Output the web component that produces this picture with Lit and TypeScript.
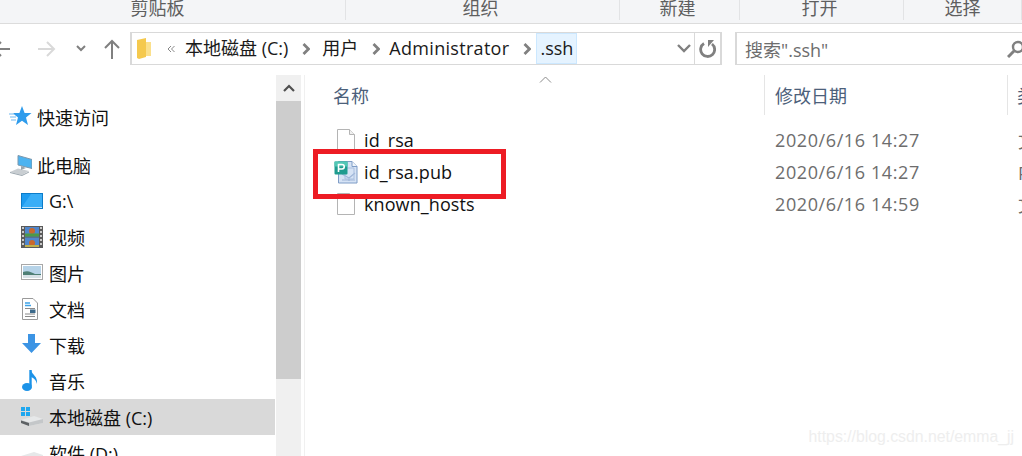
import { LitElement, html, css, svg } from "lit";
import { customElement } from "lit/decorators.js";

const chev = html`<svg class="chev" width="8" height="12" viewBox="0 0 8 12"><path d="M1.5 1 L6.5 6 L1.5 11" fill="none" stroke="#808080" stroke-width="2.8"/></svg>`;

const blank = html`<svg class="ficon" width="24" height="24" viewBox="0 0 24 24"><path d="M3.5 1.5H15.5L20.5 6.5V22.5H3.5Z" fill="#fff" stroke="#b4b4b4"/><path d="M15.5 1.5V6.5H20.5" fill="#f0f0f0" stroke="#b4b4b4"/></svg>`;

const pub = html`<svg class="ficon" width="24" height="24" viewBox="0 0 24 24">
  <path d="M4.5 1.500H18L23 6.500V23H4.500Z" fill="#d6e3f5" stroke="#7f9cc6"/>
  <path d="M18 1.500V6.500H23" fill="#f2f6fb" stroke="#7f9cc6"/>
  <path d="M8 14L15 18L21 13M15 18V21M8 20H21" fill="none" stroke="#9fb6d8" stroke-width="1.200"/>
  <path d="M11 8H20V19H11Z" fill="none" stroke="#a9bede"/>
  <rect x="0.500" y="1.500" width="13" height="13" rx="1" fill="#1f9c8f"/>
  <rect x="0.500" y="1.500" width="13" height="5" fill="#52c7b5"/>
  <path d="M4.500 12V4.500H8A2.200 2.200 0 0 1 8 9H4.500" fill="none" stroke="#fff" stroke-width="1.600"/>
</svg>`;

const star = svg`<path d="M13 0L15.600 7H22.500L17 11.500L19 19L13 14.800L7 19L9 11.500L3.500 7H10.400Z" fill="#2f9cec"/><path d="M0 8H5M1 11H7M2 14H7" stroke="#9fd0f5" stroke-width="1.300"/>`;
const pc = svg`<path d="M9 1.500L23 5.500V14.500L9 11Z" fill="#4db3f0" stroke="#7d98ad"/><path d="M1 18L9 14.500L20 17L13 21Z" fill="#c9ced2"/><path d="M12 12L17 14L12 16Z" fill="#9aa5ad"/><path d="M1 18.500L13 21.500L20 18" fill="none" stroke="#9aa5ad"/>`;
const screen = svg`<rect x="0.500" y="3.500" width="21" height="15" fill="#1e9cf0" stroke="#0c7cc9"/><path d="M1 17L10 4H21V17Z" fill="#39aef7"/><path d="M1 17.500H21" stroke="#bfe4fb"/>`;
const film = svg`<rect x="0" y="0" width="22" height="22" fill="#5a5a5a"/><rect x="4" y="1" width="14" height="9.500" fill="#4f86cc"/><rect x="4" y="11.500" width="14" height="9.500" fill="#4f86cc"/><circle cx="11" cy="5" r="3" fill="#c9682c"/><rect x="4" y="7.500" width="14" height="3" fill="#4c9a47"/><circle cx="11" cy="17" r="3" fill="#c9682c"/><rect x="4" y="19" width="14" height="2" fill="#c0b04c"/><path d="M2 1V21M20 1V21" stroke="#e4e4e4" stroke-width="1.600" stroke-dasharray="2 2"/>`;
const picture = svg`<rect x="0.500" y="2.500" width="21" height="15" fill="#fff" stroke="#a8a8a8"/><rect x="2" y="4" width="18" height="12" fill="#b6d3e8"/><path d="M2 10C7 8 10 10 14 12L20 12V16H2Z" fill="#4e7f75"/><path d="M2 13H20V16H2Z" fill="#d7e1e6"/>`;
const doc = svg`<path d="M1.500 0.500H12L16.500 5V21.500H1.500Z" fill="#fff" stroke="#9a9a9a"/><path d="M4 5H9M4 7.500H10" stroke="#3ea2e8" stroke-width="1.400"/><path d="M4 10.500H14M4 16H14M4 18.500H14" stroke="#8a8a8a"/><rect x="9" y="11.500" width="5.500" height="3.500" fill="#3d6b8c"/>`;
const down = svg`<path d="M7 0H14V9H20L10.500 19L1 9H7Z" fill="#3c94e4"/>`;
const note = svg`<path d="M9.500 0V16" stroke="#1c93e8" stroke-width="2.400"/><ellipse cx="6" cy="17" rx="5" ry="4" fill="#1c93e8"/><path d="M10 0C11 5 17 6 16 14C15 10 13 8 10 7Z" fill="#1c93e8"/>`;
const disk = svg`<path d="M0 14L13 10L22 13L22 17L8 20L0 17Z" fill="#e6e8e9"/><path d="M0 14L8 16.500L22 13L22 17L8 20L0 17Z" fill="#c4c7c9"/><path d="M0 14.500L8 17V20L0 17Z" fill="#5d6164"/><path d="M0 1H4V5H0ZM5 1H9V5H5ZM0 6H4V10H0ZM5 6H9V10H5Z" fill="#1ea7ef"/>`;
const disk2 = svg`<path d="M0 14L13 10L22 13L22 17L8 20L0 17Z" fill="#e6e8e9"/>`;

interface NavItem { label: string; icon: unknown; child: boolean; sel?: boolean; top?: boolean; }
const items: NavItem[] = [
  { label: "快速访问", icon: star, child: false },
  { label: "此电脑", icon: pc, child: false, top: true },
  { label: "G:\\", icon: screen, child: true },
  { label: "视频", icon: film, child: true },
  { label: "图片", icon: picture, child: true },
  { label: "文档", icon: doc, child: true },
  { label: "下载", icon: down, child: true },
  { label: "音乐", icon: note, child: true },
  { label: "本地磁盘 (C:)", icon: disk, child: true, sel: true },
  { label: "软件 (D:)", icon: disk2, child: true },
];

const files = [
  { name: "id_rsa", icon: blank, date: "2020/6/16 14:27", type: "文件" },
  { name: "id_rsa.pub", icon: pub, date: "2020/6/16 14:27", type: "PUB 文件" },
  { name: "known_hosts", icon: blank, date: "2020/6/16 14:59", type: "文件" },
];

@customElement("app-root")
export class AppRoot extends LitElement {
  static styles = css`
    :host {
      display: block;
      position: relative;
      width: 1022px;
      height: 456px;
      overflow: hidden;
      background: #fff;
      font-family: "Open Sans", "Noto Sans CJK SC", sans-serif;
      font-size: 18px;
      color: #1a1a1a;
    }
    .ribbon {
      display: flex;
      height: 24px;
      box-sizing: border-box;
      background: #f4f5f7;
      border-bottom: 1px solid #dcdcdc;
      color: #5f5f5f;
    }
    .group {
      height: 20px;
      line-height: 16px;
      box-sizing: border-box;
      border-right: 1px solid #e2e3e5;
      text-align: center;
      white-space: nowrap;
      flex: none;
    }
    .nav {
      display: flex;
      height: 47px;
      padding-top: 8px;
      box-sizing: border-box;
      align-items: flex-start;
    }
    .arrows {
      display: flex;
      width: 122px;
      height: 33px;
      align-items: center;
      margin-left: -8px;
      flex: none;
    }
    .arrows svg { flex: none; }
    .fwd { margin-left: 26px; }
    .drop { margin-left: 20px; }
    .up { margin-left: 18px; }
    .address {
      display: flex;
      align-items: center;
      width: 592px;
      height: 33px;
      box-sizing: border-box;
      border: 2px solid #d9d9d9;
      border-width: 1px 2px;
      flex: none;
      margin-left: 16px;
      padding-left: 5px;
    }
    .folder { flex: none; }
    .laquo { margin-left: 15px; margin-right: 10px; flex: none; }
    .crumb { white-space: nowrap; flex: none; line-height: 31px; }
    .c-user { margin-left: 1px; }
    .wide { letter-spacing: 0.3px; margin-left: -2px; }
    .chev { flex: none; margin: 0 11px 0 14px; }
    .current {
      margin-left: -6px;
      padding: 0 3px;
      height: 31px;
      box-sizing: border-box;
      background: #e5f3ff;
      border: 1px solid #cce8ff;
      line-height: 29px;
    }
    .spacer { flex: 1; }
    .combo { flex: none; margin-right: 3px; }
    .refresh {
      flex: none;
      width: 25px;
      height: 31px;
      display: flex;
      align-items: center;
      justify-content: center;
      border-left: 1px solid #d9d9d9;
    }
    .search {
      display: flex;
      align-items: center;
      justify-content: space-between;
      margin-left: 13px;
      width: 292px;
      height: 33px;
      box-sizing: border-box;
      border: 2px solid #d9d9d9;
      border-width: 1px 2px;
      padding-left: 8px;
      color: #6d6d6d;
      flex: none;
    }
    .search svg { flex: none; }
    .main {
      display: flex;
      height: 385px;
      padding-top: 4px;
      box-sizing: border-box;
    }
    .side {
      width: 275px;
      flex: none;
      padding-top: 24px;
      box-sizing: border-box;
      color: #111;
    }
    .row {
      display: flex;
      align-items: center;
      height: 36px;
      padding-left: 9px;
      box-sizing: border-box;
      white-space: nowrap;
    }
    .row svg { flex: none; margin-right: 5px; }
    .row.top { margin-top: 12px; }
    .row.child { padding-left: 21px; }
    .row.child svg { margin-right: 6px; }
    .row.sel { background: #d9d9d9; }
    .scroll {
      width: 25px;
      margin-left: 1px;
      flex: none;
      background: #f0f0f0;
      display: flex;
      flex-direction: column;
    }
    .sbtn {
      height: 26px;
      display: flex;
      align-items: center;
      justify-content: center;
      flex: none;
    }
    .thumb { height: 278px; background: #cdcdcd; flex: none; }
    .list {
      flex: 1;
      min-width: 0;
      margin-left: 3px;
      border-left: 1px solid #f0f0f0;
      position: relative;
    }
    .head {
      display: flex;
      height: 40px;
      color: #4c607a;
    }
    .col-name {
      width: 460px;
      padding-left: 28px;
      box-sizing: border-box;
      flex: none;
      white-space: nowrap;
    }
    .col-date {
      width: 243px;
      padding-left: 10px;
      box-sizing: border-box;
      flex: none;
      white-space: nowrap;
    }
    .col-type { flex: 1; padding-left: 9px; white-space: nowrap; }
    .head > div {
      line-height: 42px;
      border-right: 1px solid #e5e5e5;
    }
    .head .col-type { border-right: none; }
    .sort { position: absolute; left: 234px; top: 1px; }
    .files { padding-top: 9px; }
    .file { display: flex; height: 32px; align-items: center; }
    .file .col-name {
      display: flex;
      align-items: center;
      padding-left: 29px;
      gap: 6px;
      color: #111;
      letter-spacing: 0.1px;
    }
    .file .col-date, .file .col-type { color: #6d6d6d; }
    .file .col-date { padding-left: 10px; letter-spacing: 0.6px; }
    .file .col-type { padding-left: 10px; }
    .ficon { flex: none; }
    .mark {
      position: absolute;
      left: 313px;
      top: 149px;
      width: 193px;
      height: 50px;
      box-sizing: border-box;
      border: 5px solid #ed1c24;
      pointer-events: none;
    }
    .wm {
      position: absolute;
      right: 8px;
      top: 428px;
      font-family: "Liberation Sans", sans-serif;
      font-size: 15.8px;
      color: #eeeeee;
      white-space: nowrap;
    }
  `;

  render() {
    const groups: [string, number, number][] = [
      ["剪贴板", 346, 30], ["组织", 274, 4], ["新建", 120, 4], ["打开", 164, 4], ["选择", 118, 0],
    ];
    return html`
      <div class="ribbon">
        ${groups.map(([g, w, p]) => html`<div class="group" style="width:${w}px;padding-right:${p}px">${g}</div>`)}
      </div>
      <div class="nav">
        <div class="arrows">
          <svg width="19" height="16" viewBox="0 0 19 16"><path d="M18 8H2M9 1L2 8L9 15" fill="none" stroke="#808080" stroke-width="2"/></svg>
          <svg class="fwd" width="19" height="16" viewBox="0 0 19 16"><path d="M1 8H17M10 1L17 8L10 15" fill="none" stroke="#d9d9d9" stroke-width="2"/></svg>
          <svg class="drop" width="10" height="7" viewBox="0 0 10 7"><path d="M1 1L5 5L9 1" fill="none" stroke="#808080" stroke-width="2"/></svg>
          <svg class="up" width="16" height="20" viewBox="0 0 16 20"><path d="M8 20V2M1 9L8 2L15 9" fill="none" stroke="#808080" stroke-width="2"/></svg>
        </div>
        <div class="address">
          <svg class="folder" width="15" height="21" viewBox="0 0 15 21"><path d="M0 2L9 0V19L2 21L0 20Z" fill="#f5c94e"/><path d="M9 4H14V18H9Z" fill="#fbe08c"/></svg>
          <svg class="laquo" width="8" height="8" viewBox="0 0 8 8"><path d="M4 1L1 4L4 7M7.500 1L4.500 4L7.500 7" fill="none" stroke="#888" stroke-width="1"/></svg>
          <span class="crumb">本地磁盘 (C:)</span>${chev}
          <span class="crumb c-user">用户</span>${chev}
          <span class="crumb wide">Administrator</span>${chev}
          <span class="crumb current">.ssh</span>
          <span class="spacer"></span>
          <svg class="combo" width="14" height="9" viewBox="0 0 14 9"><path d="M1 1L7 7L13 1" fill="none" stroke="#808080" stroke-width="2.400"/></svg>
          <div class="refresh">
            <svg width="17" height="18" viewBox="0 0 17 18"><path d="M5 3.500A7 7 0 1 0 13 4" fill="none" stroke="#808080" stroke-width="2.800"/><path d="M9 0V7L15 0Z" fill="#808080"/></svg>
          </div>
        </div>
        <div class="search">
          <span>搜索".ssh"</span>
          <svg width="18" height="18" viewBox="0 0 18 18"><circle cx="11" cy="7" r="5" fill="none" stroke="#808080" stroke-width="2.400"/><path d="M7 11L1 17" stroke="#808080" stroke-width="3"/></svg>
        </div>
      </div>
      <div class="main">
        <div class="side">
          ${items.map(i => html`
            <div class="row ${i.child ? "child" : ""} ${i.sel ? "sel" : ""} ${i.top ? "top" : ""}">
              <svg width="${i.child ? 22 : 23}" height="22" viewBox="0 0 ${i.child ? 22 : 23} 22">${i.icon}</svg>${i.label}
            </div>`)}
        </div>
        <div class="scroll">
          <div class="sbtn"><svg width="12" height="8" viewBox="0 0 12 8"><path d="M1 7L6 2L11 7" fill="none" stroke="#505050" stroke-width="2.200"/></svg></div>
          <div class="thumb"></div>
        </div>
        <div class="list">
          <svg class="sort" width="13" height="7" viewBox="0 0 13 7"><path d="M1 6.500L6.500 1L12 6.500" fill="none" stroke="#8a8a8a"/></svg>
          <div class="head">
            <div class="col-name">名称</div>
            <div class="col-date">修改日期</div>
            <div class="col-type">类型</div>
          </div>
          <div class="files">
            ${files.map(f => html`
              <div class="file">
                <div class="col-name">${f.icon}<span>${f.name}</span></div>
                <div class="col-date">${f.date}</div>
                <div class="col-type">${f.type}</div>
              </div>`)}
          </div>
        </div>
      </div>
      <div class="mark"></div>
      <div class="wm">https://blog.csdn.net/emma_jj</div>
    `;
  }
}
